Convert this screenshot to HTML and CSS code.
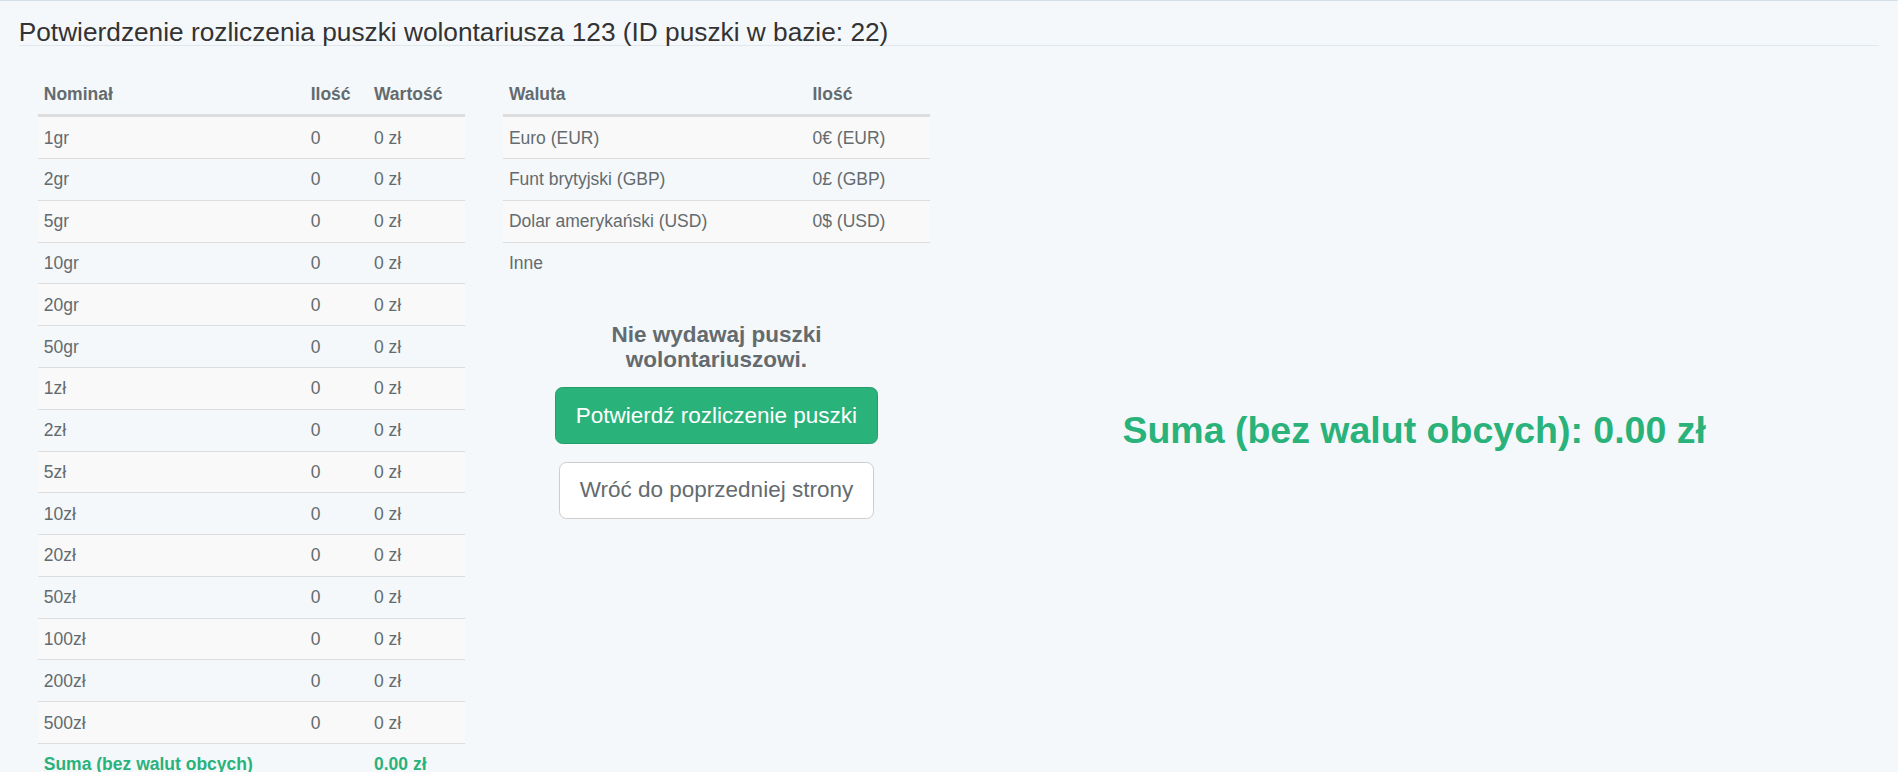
FILE: index.html
```html
<!DOCTYPE html>
<html>
  <head>
    <meta charset="UTF-8">
    <title>Rozliczenie puszki</title>
    <link rel="stylesheet" href="styles.css">
  </head>
  <body>
    <div class="container">
      <h3 class="title">Potwierdzenie rozliczenia puszki wolontariusza 123 (ID puszki w bazie: 22)</h3>
      <div class="row">
        <div class="col col-3">
          <table>
            <thead>
              <tr><th>Nominał</th><th class="w-qty">Ilość</th><th class="w-value">Wartość</th></tr>
            </thead>
            <tbody>
              <tr><td>1gr</td><td>0</td><td>0 zł</td></tr>
              <tr><td>2gr</td><td>0</td><td>0 zł</td></tr>
              <tr><td>5gr</td><td>0</td><td>0 zł</td></tr>
              <tr><td>10gr</td><td>0</td><td>0 zł</td></tr>
              <tr><td>20gr</td><td>0</td><td>0 zł</td></tr>
              <tr><td>50gr</td><td>0</td><td>0 zł</td></tr>
              <tr><td>1zł</td><td>0</td><td>0 zł</td></tr>
              <tr><td>2zł</td><td>0</td><td>0 zł</td></tr>
              <tr><td>5zł</td><td>0</td><td>0 zł</td></tr>
              <tr><td>10zł</td><td>0</td><td>0 zł</td></tr>
              <tr><td>20zł</td><td>0</td><td>0 zł</td></tr>
              <tr><td>50zł</td><td>0</td><td>0 zł</td></tr>
              <tr><td>100zł</td><td>0</td><td>0 zł</td></tr>
              <tr><td>200zł</td><td>0</td><td>0 zł</td></tr>
              <tr><td>500zł</td><td>0</td><td>0 zł</td></tr>
              <tr class="sum"><td>Suma (bez walut obcych)</td><td></td><td>0.00 zł</td></tr>
            </tbody>
          </table>
        </div>
        <div class="col col-3">
          <table>
            <thead>
              <tr><th>Waluta</th><th class="w-amount">Ilość</th></tr>
            </thead>
            <tbody>
              <tr><td>Euro (EUR)</td><td>0€ (EUR)</td></tr>
              <tr><td>Funt brytyjski (GBP)</td><td>0£ (GBP)</td></tr>
              <tr><td>Dolar amerykański (USD)</td><td>0$ (USD)</td></tr>
              <tr><td>Inne</td><td></td></tr>
            </tbody>
          </table>
          <div class="actions">
            <h4 class="notice">Nie wydawaj puszki wolontariuszowi.</h4>
            <button class="btn btn-success">Potwierdź rozliczenie puszki</button>
            <button class="btn btn-default">Wróć do poprzedniej strony</button>
          </div>
        </div>
        <div class="col col-6">
          <h2 class="total">Suma (bez walut obcych): 0.00 zł</h2>
        </div>
      </div>
    </div>
  </body>
</html>
```

FILE: styles.css
```css
* { box-sizing: border-box }
html, body { margin: 0 }
body { background: #f5f8fa; border-top: 1px solid #d3e0e9; color: #636b6f; font-family: "Liberation Sans", Arial, sans-serif; font-size: 17.5px; line-height: 1.6 }

.container { padding: 0 18.75px }
.title { border-bottom: 1px solid #e1e8ed; color: #333; font-size: 26.25px; font-weight: 400; line-height: 1; margin: 17.5px 0 0 }
.row { display: flex; margin-top: 27.75px }
.col { padding: 0 18.75px }
.col-3 { width: 25% }
.col-6 { width: 50% }

table { border-collapse: separate; border-spacing: 0; margin-bottom: 25px; width: 100% }
th, td { padding: 6.4px 6.25px; text-align: left; vertical-align: top }
th { border-bottom: 2px solid #ddd; font-weight: 700 }
td { border-top: 1px solid #ddd }
tbody tr:nth-child(odd) { background: #f9f9f9 }
.w-qty { width: 63.3px }
.w-value { width: 97.4px }
.w-amount { width: 124px }
.sum td { color: #2ab27b; font-weight: 700 }

.actions { align-items: center; display: flex; flex-direction: column }
.notice { font-size: 22.5px; font-weight: 700; line-height: 1.1; margin: 14.5px 0 15px; max-width: 330px; text-align: center }
.btn { border: 1px solid transparent; border-radius: 7.5px; cursor: pointer; font-family: inherit; font-size: 22.5px; line-height: 1.3333; padding: 12.5px 20px }
.btn-success { background: #2ab27b; border-color: #259d6d; color: #fff }
.btn-default { background: #fff; border-color: #ccc; color: #636b6f; margin-top: 17.5px }

.total { color: #2ab27b; font-size: 37.5px; font-weight: 700; line-height: 1.1; margin: 336px 0 0; text-align: center }
```
